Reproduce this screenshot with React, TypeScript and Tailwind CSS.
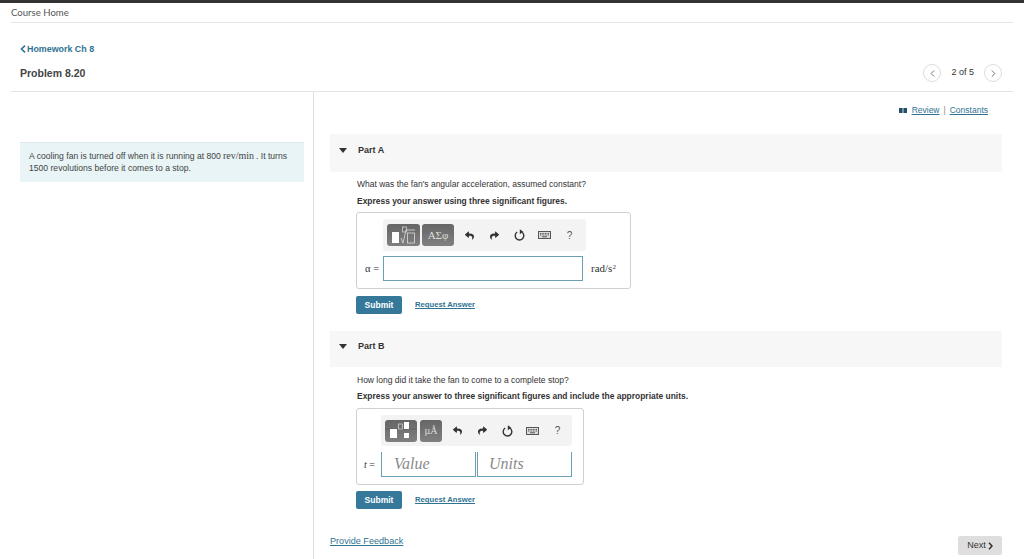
import { ChevronLeft, ChevronRight } from "lucide-react";
import { FaReply, FaShare } from "react-icons/fa";
import type { ReactNode } from "react";

const sans = "font-['Liberation_Sans',Arial,sans-serif]";
const serif = "font-['Liberation_Serif','Times_New_Roman',serif]";
const teal = "text-[#2f7391]";

function Keyboard() {
  return (
    <svg width="13" height="8" viewBox="0 0 13 8" className="text-[#555]">
      <rect x="0.5" y="0.5" width="12" height="7" fill="#ddd" stroke="currentColor" />
      <path d="M2 2.5h9M2 4h9" stroke="currentColor" strokeDasharray="1 0.6" />
      <path d="M4 5.8h5" stroke="currentColor" />
    </svg>
  );
}

function Reload() {
  return (
    <svg width="11" height="12" viewBox="0 0 11 12" className="text-[#333]">
      <path d="M3.2 3A4.3 4.3 0 1 0 7.8 3" fill="none" stroke="currentColor" strokeWidth="1.4" />
      <path d="M5.2 0.2v5L1.8 2.7z" fill="currentColor" transform="matrix(-1 0 0 1 11 0)" />
    </svg>
  );
}

function ToolIcons() {
  return (
    <div className="flex items-center text-[#333]">
      <span className="flex w-[25px] justify-center"><FaReply size={9} /></span>
      <span className="flex w-[25px] justify-center"><FaShare size={9} /></span>
      <span className="flex w-[25px] justify-center"><Reload /></span>
      <span className="flex w-[25px] justify-center"><Keyboard /></span>
      <span className={`${sans} flex w-[25px] justify-center text-[10px] text-[#555]`}>?</span>
    </div>
  );
}

function DarkButton({ className, children }: { className: string; children: ReactNode }) {
  return (
    <div
      className={`flex h-[22px] items-center justify-center overflow-hidden rounded-[3px] bg-gradient-to-b from-[#666] to-[#808080] text-[#ddd] ${className}`}
    >
      {children}
    </div>
  );
}

function PartHeader({ name, tall }: { name: string; tall?: boolean }) {
  return (
    <div className={`flex items-start bg-[#f7f7f7] pl-[9px] ${tall ? "h-[38px] pt-[11px]" : "h-[36px] pt-[10px]"}`}>
      <svg width="8" height="5" viewBox="0 0 8 5" className="mt-[3px]">
        <path d="M0 0h8L4 5z" fill="#333" />
      </svg>
      <span className={`${sans} ml-[11px] text-[9px] font-bold leading-[11px] text-[#333]`}>{name}</span>
    </div>
  );
}

function Submit() {
  return (
    <div className="flex items-center">
      <div className="flex h-[18px] w-[46px] items-center justify-center rounded-[2px] bg-[#36789a] text-[8.5px] font-bold text-white">
        Submit
      </div>
      <span className={`ml-[13px] text-[7.7px] font-bold underline ${teal}`}>Request Answer</span>
    </div>
  );
}

function NavCircle({ children }: { children: ReactNode }) {
  return (
    <span className="flex h-[18px] w-[18px] items-center justify-center rounded-full border border-[#ddd] text-[#666]">
      {children}
    </span>
  );
}

export default function App() {
  return (
    <div className={`${sans} h-[559px] w-[1024px] overflow-hidden border-t-[3px] border-[#333] bg-white text-[#333]`}>
      <div className="mx-[11px] h-[20px] border-b border-[#e3e3e3] pt-[3px] font-['Lato',sans-serif] text-[9.6px] leading-[13px] text-[#555]">
        Course Home
      </div>

      <div className="mx-[11px] flex h-[69px] flex-col border-b border-[#e3e3e3] pl-[9px] pt-[20px]">
        <div className={`flex items-center text-[8.9px] font-bold leading-[12px] ${teal}`}>
          <svg width="6" height="8" viewBox="0 0 6 8" className="mr-[1px]">
            <path d="M5 0.7L1.5 4 5 7.3" fill="none" stroke="currentColor" strokeWidth="1.6" />
          </svg>
          Homework Ch 8
        </div>
        <div className="mt-[9px] flex items-center justify-between pr-[11px]">
          <span className="text-[10.5px] font-bold leading-[12px] text-[#444]">Problem 8.20</span>
          <div className="flex items-center text-[9px] text-[#333]">
            <NavCircle><ChevronLeft size={11} /></NavCircle>
            <span className="mx-[10px]">2 of 5</span>
            <NavCircle><ChevronRight size={11} /></NavCircle>
          </div>
        </div>
      </div>

      <div className="flex h-[467px]">
        <div className="w-[314px] shrink-0 border-r border-[#dde1e5] pl-[20px] pr-[9px] pt-[50px]">
          <div className="h-[40px] border-t border-[#dfe9eb] bg-[#e8f4f6] px-[9px] pt-[7px] text-[8.6px] leading-[11.5px] text-[#444]">
            <div className="flex items-baseline gap-[2px] whitespace-nowrap">
              <span>A cooling fan is turned off when it is running at 800</span>
              <span className={`${serif} text-[10px] leading-[11.5px]`}>rev/min</span>
              <span>. It turns</span>
            </div>
            <div>1500 revolutions before it comes to a stop.</div>
          </div>
        </div>

        <div className="flex-1 pl-[16px] pr-[22px]">
          <div className={`flex h-[42px] items-start justify-end pr-[14px] pt-[13px] text-[8.5px] leading-[11px] ${teal}`}>
            <svg width="8" height="5" viewBox="0 0 8 5" className="mt-[3px] mr-[5px]">
              <path d="M0 0h3.6v5H0zM4.4 0h3.6v5H4.4z" fill="#24506a" />
            </svg>
            <span className="underline">Review</span>
            <span className="mx-[4px] text-[#888]">|</span>
            <span className="underline">Constants</span>
          </div>

          <PartHeader name="Part A" tall />
          <div className="pl-[26px]">
            <p className="ml-[1px] mt-[6.5px] text-[8.5px] leading-[11px] text-[#333]">What was the fan's angular acceleration, assumed constant?</p>
            <p className="ml-[1px] mt-[6px] text-[8.45px] font-bold leading-[11px] text-[#333]">Express your answer using three significant figures.</p>

            <div className="mt-[5.5px] h-[77px] w-[275px] rounded-[3px] border border-[#d0d0d0] pl-[26px] pt-[6px]">
              <div className="flex h-[32px] w-[203px] items-center rounded-[3px] bg-[#f3f3f3] pl-[4px]">
                <DarkButton className="w-[33px]">
                  <svg width="33" height="22" viewBox="0 0 33 22">
                    <rect x="5" y="8" width="7" height="11" fill="#fff" />
                    <path d="M14 14l2 5 3-13h9" fill="none" stroke="#ddd" strokeWidth="0.8" />
                    <rect x="15.5" y="3" width="4" height="5" fill="none" stroke="#ddd" strokeWidth="0.7" />
                    <rect x="20.5" y="9" width="7" height="10" fill="none" stroke="#ddd" strokeWidth="0.8" />
                  </svg>
                </DarkButton>
                <DarkButton className={`${serif} ml-[2px] w-[32px] text-[11px]`}>ΑΣφ</DarkButton>
                <div className="ml-[3px]">
                  <ToolIcons />
                </div>
              </div>
              <div className="ml-[-18px] mt-[5px] flex items-center">
                <span className={`${serif} w-[18px] text-[10.5px] text-[#333]`}>α =</span>
                <div className="h-[25px] w-[200px] border border-[#6a9fb5]" />
                <span className={`${serif} ml-[8px] text-[11px] leading-[11px] text-[#333]`}>
                  rad/s<sup className="text-[7px]">2</sup>
                </span>
              </div>
            </div>

            <div className="mt-[7px]">
              <Submit />
            </div>
          </div>

          <div className="mt-[17px]">
            <PartHeader name="Part B" />
          </div>
          <div className="pl-[26px]">
            <p className="ml-[1px] mt-[7.5px] text-[8.5px] leading-[11px] text-[#333]">How long did it take the fan to come to a complete stop?</p>
            <p className="ml-[1px] mt-[5px] text-[8.45px] font-bold leading-[11px] text-[#333]">
              Express your answer to three significant figures and include the appropriate units.
            </p>

            <div className="mt-[6.5px] h-[77px] w-[228px] rounded-[3px] border border-[#d0d0d0] pl-[24px] pt-[6px]">
              <div className="flex h-[31px] w-[191px] items-center rounded-[3px] bg-[#f3f3f3] pl-[4px]">
                <DarkButton className="w-[32px]">
                  <svg width="32" height="22" viewBox="0 0 32 22">
                    <path d="M0 9h32" stroke="#555" strokeWidth="0.6" />
                    <rect x="5" y="9" width="7" height="9" fill="#fff" />
                    <rect x="13.5" y="4" width="4" height="5" fill="none" stroke="#ddd" strokeWidth="0.7" />
                    <rect x="19" y="2" width="5" height="7" fill="#fff" />
                    <rect x="19" y="13" width="5" height="5" fill="#fff" />
                  </svg>
                </DarkButton>
                <DarkButton className={`${serif} ml-[3px] w-[22px] text-[10px]`}>µÅ</DarkButton>
                <div className="ml-[3px]">
                  <ToolIcons />
                </div>
              </div>
              <div className="ml-[-17px] mt-[6px] flex items-center">
                <span className={`${serif} w-[17px] text-[10px] text-[#333]`}>
                  <i>t</i> =
                </span>
                <div className={`${serif} flex h-[25px] w-[95px] items-center border-x border-b border-[#6a9fb5] pl-[12px] text-[16px] italic text-[#8a8a8a]`}>
                  Value
                </div>
                <div className={`${serif} ml-[1px] flex h-[25px] w-[95px] items-center border-x border-b border-[#6a9fb5] pl-[11px] text-[16px] italic text-[#8a8a8a]`}>
                  Units
                </div>
              </div>
            </div>

            <div className="mt-[6px]">
              <Submit />
            </div>
          </div>

          <div className="mt-[14px] flex items-start justify-between">
            <span className={`mt-[12px] text-[9.1px] underline ${teal}`}>Provide Feedback</span>
            <div className="mt-[13px] flex h-[19px] w-[44px] items-center justify-center gap-[2px] rounded-[2px] bg-[#dedede] text-[9px] text-[#333]">
              Next
              <svg width="5" height="8" viewBox="0 0 5 8">
                <path d="M1 0.7L4 4 1 7.3" fill="none" stroke="currentColor" strokeWidth="1.5" />
              </svg>
            </div>
          </div>
        </div>
      </div>
    </div>
  );
}
